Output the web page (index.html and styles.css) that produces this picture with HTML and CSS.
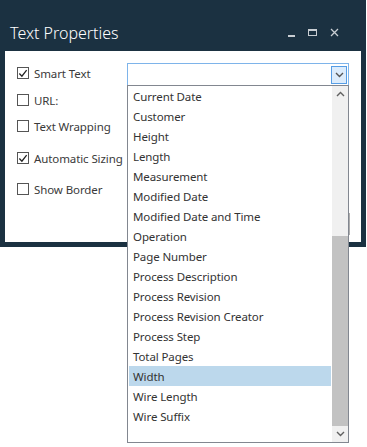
FILE: index.html
```html
<!DOCTYPE html>
<html lang="en">
<head>
    <meta charset="UTF-8">
    <title>Text Properties</title>
    <link rel="stylesheet" href="styles.css">
</head>
<body>
    <div class="window">
        <div class="titlebar">
            <span class="title">Text Properties</span>
            <div class="controls">
                <span class="ctl ctl-min"></span>
                <span class="ctl ctl-max"></span>
                <svg class="ctl-close" width="9" height="9" viewBox="0 0 9 9">
                    <path d="M1 1 L8 8 M8 1 L1 8" stroke="#c9ced3" stroke-width="1.3" fill="none"/>
                </svg>
            </div>
        </div>

        <div class="content">
            <div class="form">
                <div class="options">
                    <label class="option opt-smart"><span class="box checked"><svg width="11" height="11" viewBox="0 0 11 11"><path d="M1.5 5.5 L4.3 8.5 L9.5 1.8" stroke="#222" stroke-width="1.4" fill="none"/></svg></span>Smart Text</label>
                    <label class="option opt-url"><span class="box"></span>URL:</label>
                    <label class="option opt-wrap"><span class="box"></span>Text Wrapping</label>
                    <label class="option opt-size"><span class="box checked"><svg width="11" height="11" viewBox="0 0 11 11"><path d="M1.5 5.5 L4.3 8.5 L9.5 1.8" stroke="#222" stroke-width="1.4" fill="none"/></svg></span>Automatic Sizing</label>
                    <label class="option opt-border"><span class="box"></span>Show Border</label>
                </div>
                <div class="combo">
                    <span class="combo-btn">
                        <svg width="9" height="6" viewBox="0 0 9 6"><path d="M1 1 L4.5 4.5 L8 1" stroke="#555" stroke-width="1.4" fill="none"/></svg>
                    </span>
                </div>
            </div>
            <div class="footer">
                <button class="ok-btn">OK</button>
            </div>
        </div>

        <div class="popup">
            <ul class="list">
                <li>Current Date</li>
                <li>Customer</li>
                <li>Height</li>
                <li>Length</li>
                <li>Measurement</li>
                <li>Modified Date</li>
                <li>Modified Date and Time</li>
                <li>Operation</li>
                <li>Page Number</li>
                <li>Process Description</li>
                <li>Process Revision</li>
                <li>Process Revision Creator</li>
                <li>Process Step</li>
                <li>Total Pages</li>
                <li class="selected">Width</li>
                <li>Wire Length</li>
                <li>Wire Suffix</li>
            </ul>
            <div class="scrollbar">
                <span class="sb-arrow">
                    <svg width="9" height="6" viewBox="0 0 9 6"><path d="M1 5 L4.5 1.5 L8 5" stroke="#606060" stroke-width="1.4" fill="none"/></svg>
                </span>
                <div class="sb-track">
                    <div class="sb-space"></div>
                    <div class="sb-thumb"></div>
                </div>
                <span class="sb-arrow">
                    <svg width="9" height="6" viewBox="0 0 9 6"><path d="M1 1 L4.5 4.5 L8 1" stroke="#606060" stroke-width="1.4" fill="none"/></svg>
                </span>
            </div>
        </div>
    </div>
</body>
</html>
```

FILE: styles.css
```css
* {
    margin: 0;
    padding: 0;
    box-sizing: border-box;
    font-family: 'Noto Sans', 'Open Sans', sans-serif;
}

html, body {
    height: 100%;
}

body {
    background-color: white;
    color: #333;
    min-height: 447px;
}

.window {
    width: 366px;
    background-color: #1b3141;
    padding: 0 5px 5px 5px;
    position: relative;
}

.titlebar {
    height: 51px;
    display: flex;
    justify-content: space-between;
    align-items: center;
    padding: 14px 0 0 5px;
}

.title {
    color: white;
    font-size: 16px;
    font-weight: 300;
}

.controls {
    display: flex;
    align-items: center;
    gap: 13px;
    padding-right: 22px;
    padding-top: 0;
}

.ctl {
    display: inline-block;
}

.ctl-min {
    width: 7px;
    height: 2px;
    margin-top: 7px;
    background-color: #c9ced3;
}

.ctl-max {
    width: 9px;
    height: 7px;
    border: 1px solid #c9ced3;
    border-top-width: 2px;
}

.content {
    background-color: white;
    height: 191px;
    display: flex;
    flex-direction: column;
}

.form {
    display: flex;
    padding: 12px 0 0 12px;
}

.options {
    width: 110px;
    display: flex;
    flex-direction: column;
}

.option {
    display: flex;
    align-items: center;
    height: 16px;
    font-size: 11.5px;
    letter-spacing: -0.1px;
    color: #3a3a3a;
    white-space: nowrap;
}

.opt-smart { margin-top: 2px; }
.opt-url { margin-top: 11px; }
.opt-wrap { margin-top: 10px; }
.opt-size { margin-top: 16px; }
.opt-border { margin-top: 15px; }

.box {
    width: 12px;
    height: 12px;
    border: 1px solid #555;
    background-color: white;
    margin-right: 5px;
    display: flex;
    align-items: center;
    justify-content: center;
    flex-shrink: 0;
}

.combo {
    width: 222px;
    height: 23px;
    border: 1px solid #7eb4ea;
    display: flex;
    justify-content: flex-end;
    align-items: center;
    padding-right: 1px;
}

.combo-btn {
    width: 16px;
    height: 18px;
    border: 1px solid #569de5;
    background-color: #dcecfc;
    display: flex;
    align-items: center;
    justify-content: center;
}

.footer {
    margin-top: auto;
    display: flex;
    justify-content: flex-end;
    padding: 0 11px 7px 0;
}

.ok-btn {
    width: 75px;
    height: 22px;
    border: 1px solid #adadad;
    background-color: #e1e1e1;
    font-size: 12px;
}

.popup {
    position: absolute;
    left: 127px;
    top: 85px;
    width: 222px;
    height: 358px;
    border: 1px solid #828790;
    background-color: white;
    display: flex;
    z-index: 2;
}

.list {
    flex: 1;
    list-style: none;
    padding: 0 1px;
}

.list li {
    height: 20px;
    line-height: 20px;
    font-size: 11.5px;
    letter-spacing: -0.1px;
    padding: 1px 0 0 4px;
    color: #333;
    white-space: nowrap;
}

.list li.selected {
    background-color: #bcd8ec;
}

.scrollbar {
    width: 16px;
    background-color: #f0f0f0;
    display: flex;
    flex-direction: column;
}

.sb-arrow {
    height: 16px;
    display: flex;
    align-items: center;
    justify-content: center;
}

.sb-track {
    flex: 1;
    display: flex;
    flex-direction: column;
}

.sb-space {
    height: 134px;
}

.sb-thumb {
    flex: 1;
    background-color: #c2c2c2;
}
```
